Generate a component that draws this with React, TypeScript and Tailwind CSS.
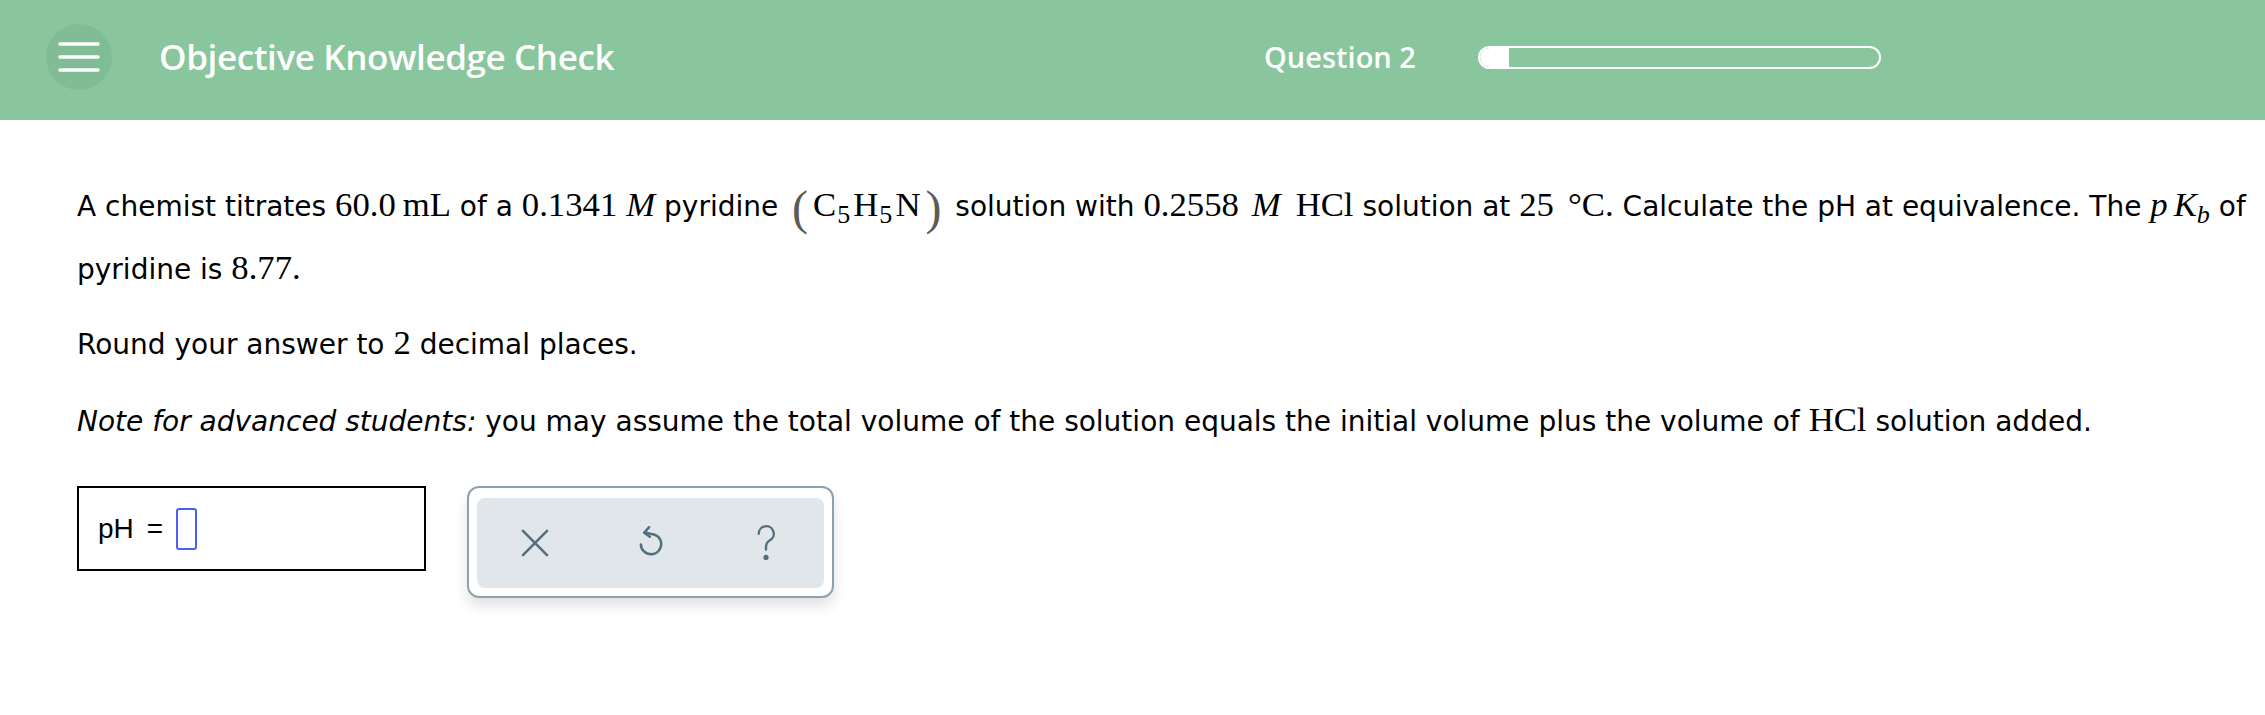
import React from "react";
import clsx from "clsx";

// math-ish inline text (MathJax look)
const M: React.FC<{ i?: boolean; className?: string; children: React.ReactNode }> = ({ i, className, children }) => (
  <span className={clsx("font-['Liberation_Serif',serif] text-[1.24em]", i && "italic", className)}>
    {children}
  </span>
);

const Paren: React.FC<{ children: React.ReactNode }> = ({ children }) => (
  <span className="font-['Liberation_Serif',serif] text-[48px] text-[#5a5a5a] align-[-8px] mx-[5px]">
    {children}
  </span>
);

const App: React.FC = () => {
  return (
    <div className="min-h-screen bg-white font-['DejaVu_Sans',sans-serif] text-black">
      {/* Top bar */}
      <header className="h-[120px] bg-[#89c59d] flex items-center pb-[6px] text-white">
        <div className="w-[1264px] flex items-center pl-[46px]">
          <button className="w-[66px] h-[66px] rounded-full bg-[#80bd94] flex items-center justify-center">
            <svg width="42" height="30" viewBox="0 0 42 30">
              <g stroke="#fff" strokeWidth="3.5" strokeLinecap="round">
                <line x1="2" y1="2" x2="40" y2="2" />
                <line x1="2" y1="15" x2="40" y2="15" />
                <line x1="2" y1="28" x2="40" y2="28" />
              </g>
            </svg>
          </button>
          <span className="ml-[47px] font-['Open_Sans',sans-serif] font-semibold text-[35px] tracking-[-0.4px]">
            Objective Knowledge Check
          </span>
        </div>
        <span className="font-['Open_Sans',sans-serif] font-semibold text-[29px]">Question 2</span>
        <div className="ml-[62px] w-[403px] h-[23px] border-2 border-white rounded-full overflow-hidden">
          <div className="w-[29px] h-full bg-white rounded-l-full" />
        </div>
      </header>

      <main className="pl-[77px] pt-[55px] text-[28px]">
        <div className="whitespace-nowrap leading-[60px]">
          A chemist titrates <M>60.0&thinsp;mL</M> of a <M>0.1341</M> <M i>M</M> pyridine{" "}
          <Paren>(</Paren>
          <M>
            C<sub className="ml-[1px] mr-[3px]">5</sub>H<sub className="ml-[1px] mr-[3px]">5</sub>N
          </M>
          <Paren>)</Paren> solution with <M>0.2558</M> <M i className="ml-[4px]">M</M>{" "}
          <M className="ml-[6px]">HCl</M> solution at <M>25</M>
          <M className="ml-[14px]">°C.</M> Calculate the pH at equivalence. The{" "}
          <M i>
            p<span className="ml-[6px]">K</span>
            <sub>b</sub>
          </M>{" "}
          of
        </div>
        <div className="whitespace-nowrap leading-[60px]">
          pyridine is <M>8.77.</M>
        </div>

        <p className="mt-[22px] leading-[42px]">
          Round your answer to <M>2</M> decimal places.
        </p>

        <p className="mt-[33px] leading-[42px]">
          <i>Note for advanced students:</i> you may assume the total volume of the solution equals the initial
          volume plus the volume of <M>HCl</M> solution added.
        </p>

        <div className="mt-[43px] flex items-start gap-[41px]">
          <div className="w-[349px] h-[85px] border-2 border-black flex items-center gap-[13px] pl-[19px] font-['Liberation_Sans',sans-serif] text-[28px]">
            <span>pH</span>
            <span>=</span>
            <span className="w-[21px] h-[42px] border-2 border-[#4b5ff5] rounded-[3px]" />
          </div>

          <div className="w-[367px] h-[112px] border-2 border-[#8ca1ab] rounded-[12px] px-[8px] pt-[10px] pb-[8px] shadow-[0_8px_14px_rgba(0,0,0,0.12)]">
            <div className="h-full bg-[#e0e6e9] rounded-[8px] grid grid-cols-3 items-center justify-items-center text-[#52707c]">
              <svg width="34" height="34" viewBox="0 0 24 24" fill="none" stroke="currentColor" strokeWidth="1.8" strokeLinecap="round">
                <line x1="3.5" y1="3.5" x2="20.5" y2="20.5" />
                <line x1="20.5" y1="3.5" x2="3.5" y2="20.5" />
              </svg>
              <svg width="33" height="40" viewBox="0 0 24 28" fill="none" stroke="currentColor" strokeWidth="1.8" strokeLinecap="round" strokeLinejoin="round">
                <path d="M11 2.5 L7.5 6.5 L11.5 9.5" />
                <path d="M7.5 6.5 Q11.5 7 12.5 7.4 A7.4 7.4 0 1 1 5 15" />
              </svg>
              <svg width="32" height="42" viewBox="0 0 24 32" fill="none" stroke="currentColor" strokeWidth="1.8" strokeLinecap="round">
                <path d="M6.5 9 A5.7 5.7 0 1 1 14.8 14 C12.9 15.3 12 16.6 12 19 V21" />
                <circle cx="12" cy="27" r="1.1" fill="currentColor" />
              </svg>
            </div>
          </div>
        </div>
      </main>
    </div>
  );
};

export default App;
